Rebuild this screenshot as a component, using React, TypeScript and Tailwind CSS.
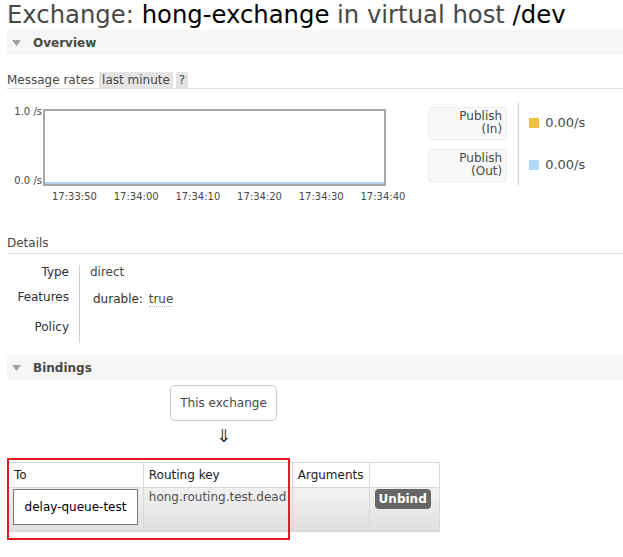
import React from "react";

const SectionBar = ({ title }: { title: string }) => (
  <div className="flex h-[25px] items-center bg-[#f6f6f6] pl-[5px]">
    <svg width="9" height="6" viewBox="0 0 9 6" className="mr-[12px]">
      <path d="M0 0 L9 0 L4.5 6 Z" fill="#a0a0a0" />
    </svg>
    <span className="text-[12px] font-bold text-[#484848]">{title}</span>
  </div>
);

const LegendRow = ({ label, sub, color }: { label: string; sub: string; color: string }) => (
  <div className="flex h-[42px] items-center">
    <div className="flex h-[33px] w-[79px] flex-col items-end justify-center rounded-[3px] border border-[#ececec] bg-[#f8f8f8] pr-[4px] text-[12px] leading-[13px] text-[#484848]">
      <span>{label}</span>
      <span>{sub}</span>
    </div>
    <div className="ml-[11px] h-full w-px bg-[#d0d0d0]" />
    <div className={`ml-[10px] h-[10px] w-[10px] ${color}`} />
    <span className="ml-[6px] text-[13px] text-[#484848]">0.00/s</span>
  </div>
);

export default function App() {
  const ticks = ["17:33:50", "17:34:00", "17:34:10", "17:34:20", "17:34:30", "17:34:40"];

  return (
    <div className="relative min-h-[557px] w-[623px] overflow-hidden bg-white pl-[7px] font-['DejaVu_Sans',Verdana,sans-serif] text-[#484848]">
      {/* title */}
      <h1 className="h-[30px] whitespace-nowrap text-[24.3px] leading-[30px] text-[#484848]">
        Exchange: <span className="text-black">hong-exchange</span> in virtual host{" "}
        <span className="text-black">/dev</span>
      </h1>

      <SectionBar title="Overview" />

      {/* message rates header */}
      <div className="mt-[17px] flex h-[17px] items-center border-b border-[#e0e0e0] text-[12px]">
        <span>Message rates</span>
        <span className="ml-[5px] bg-[#e4e4e4] px-[3px] leading-[17px]">last minute</span>
        <span className="ml-[3px] bg-[#e4e4e4] px-[3px] leading-[17px]">?</span>
      </div>

      {/* chart + legend */}
      <div className="mt-[14px] flex">
        <div className="flex flex-col">
          <div className="flex">
            <div className="flex h-[80px] w-[35px] flex-col justify-between text-right text-[10px] leading-[10px] text-[#484848]">
              <span className="mt-[4px]">1.0 /s</span>
              <span className="mb-[-3px]">0.0 /s</span>
            </div>
            <div className="ml-[1px] mt-[6px] flex h-[77px] w-[343px] flex-col justify-end border-2 border-[#a8a8a8] bg-white">
              <div className="h-[2px] bg-[#aed4f2]" />
            </div>
          </div>
          <div className="ml-[45px] mt-[5px] flex text-[10px] leading-[12px]">
            {ticks.map((t) => (
              <span key={t} className="w-[61.7px]">
                {t}
              </span>
            ))}
          </div>
        </div>
        <div className="ml-[6px] mt-[-1px] flex flex-col">
          <LegendRow label="Publish" sub="(In)" color="bg-[#edc240]" />
          <LegendRow label="Publish" sub="(Out)" color="bg-[#afd8f8]" />
        </div>
      </div>

      {/* details */}
      <div className="mt-[33px] h-[18px] border-b border-[#e0e0e0] text-[12px] leading-[14px]">Details</div>
      <div className="mt-[11px] flex">
        <div className="flex w-[62px] flex-col items-end text-[12px] text-[#303030]">
          <span className="h-[25px] leading-[14px]">Type</span>
          <span className="h-[30px] leading-[14px]">Features</span>
          <span className="h-[23px] leading-[14px]">Policy</span>
        </div>
        <div className="ml-[10px] w-px bg-[#d0d0d0]" />
        <div className="ml-[10px] flex flex-col text-[12px]">
          <span className="h-[25px] leading-[14px]">direct</span>
          <span className="ml-[3px] h-[30px] leading-[14px] text-[#303030]">
            durable:{" "}
            <span className="ml-[2px] inline-block border-b border-dotted border-[#bbb] pt-[3px] leading-[13px] text-[#484848]">
              true
            </span>
          </span>
        </div>
      </div>

      <div className="mt-[12px]">
        <SectionBar title="Bindings" />
      </div>

      {/* bindings */}
      <div className="flex w-[433px] flex-col items-center">
        <div className="mt-[5px] flex h-[36px] w-[107px] items-center justify-center rounded-[5px] border border-[#c8c8c8] text-[12px]">
          This exchange
        </div>
        <div className="mt-[5px] h-[20px] text-[18px] leading-[20px] text-[#303030]">⇓</div>
      </div>

      <div className="relative mt-[16px] w-[433px] pl-px">
        <table className="border-collapse text-[12px]">
          <thead>
            <tr className="h-[25px] bg-white text-left text-[#202020]">
              <th className="w-[135px] border border-[#d8d8d8] px-[5px] font-normal">To</th>
              <th className="w-[149px] border border-[#d8d8d8] px-[5px] font-normal">Routing key</th>
              <th className="w-[77px] border border-[#d8d8d8] px-[5px] font-normal">Arguments</th>
              <th className="w-[71px] border border-[#d8d8d8] px-[5px] font-normal"></th>
            </tr>
          </thead>
          <tbody>
            <tr className="h-[44px] bg-[linear-gradient(#f2f2f2,#dfdfdf)] align-top">
              <td className="border border-[#d8d8d8] px-[4px] pt-[1px]">
                <div className="flex h-[36px] w-[125px] items-center justify-center border border-[#777] bg-white text-black">
                  delay-queue-test
                </div>
              </td>
              <td className="border border-[#d8d8d8] px-[5px] pt-[2px] leading-[14px] text-[#505050]">
                hong.routing.test.dead
              </td>
              <td className="border border-[#d8d8d8]"></td>
              <td className="border border-[#d8d8d8] px-[5px] pt-[1px]">
                <span className="inline-flex h-[20px] w-[56px] items-center justify-center rounded-[4px] bg-[#666] font-bold text-white">
                  Unbind
                </span>
              </td>
            </tr>
          </tbody>
        </table>
        {/* highlight overlay */}
        <div className="pointer-events-none absolute left-0 top-[-4px] h-[82px] w-[283px] border-2 border-[#e31b23]" />
      </div>
    </div>
  );
}
